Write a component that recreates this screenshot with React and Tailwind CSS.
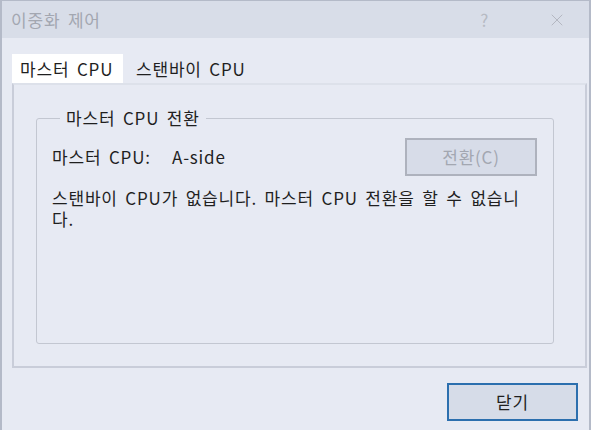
import { X } from "lucide-react";

const font = { fontFamily: '"Noto Sans CJK KR", "Noto Sans", sans-serif' };

export default function App() {
  return (
    <div
      className="w-[591px] h-[430px] bg-[#e7eaf3] border-l-[2px] border-r-[2px] border-t border-[#b4bac8] flex flex-col text-[17px] tracking-[0.8px] [word-spacing:3px] text-[#1f1f1f] overflow-hidden"
      style={font}
    >
      <div className="h-[37px] bg-[#d8dde8] flex items-center pl-[9px] shrink-0">
        <span className="text-[#a3a7b1]">이중화 제어</span>
        <span className="ml-auto mr-[58px] text-[#b6bac3]">?</span>
        <X className="mr-[22px] text-[#b0b4bd]" size={20} strokeWidth={1.1} />
      </div>

      <div className="pl-[10px] pr-[2px] pt-[16px]">
        <div className="flex h-[29px] leading-none">
          <div className="bg-white w-[111px] pl-[8px] flex items-center">마스터 CPU</div>
          <div className="pl-[13px] flex items-center">스탠바이 CPU</div>
        </div>

        <div className="h-[285px] border-2 border-[#c9cdd9] border-t-[#dde1ea] pl-[22px] pr-[32px] pt-[23px]">
          <fieldset className="h-[236px] border border-[#c3c7d1] rounded-[3px] pl-[15px] pr-[15px]">
            <legend className="ml-[8px] px-[6px] leading-[20px]">마스터 CPU 전환</legend>
            <div className="flex items-center mt-[10px]">
              <span className="w-[120px]">마스터 CPU:</span>
              <span>A-side</span>
              <button className="ml-auto mr-[1px] w-[132px] h-[38px] bg-[#d7dce8] border-2 border-[#aeb2bd] text-[#a3a7b1]">
                전환(C)
              </button>
            </div>
            <p className="mt-[11px] leading-[21px] w-[486px] break-all">
              스탠바이 CPU가 없습니다. 마스터 CPU 전환을 할 수 없습니다.
            </p>
          </fieldset>
        </div>

        <div className="flex justify-end pr-[9px] pt-[15px]">
          <button className="w-[131px] h-[38px] bg-[#d6dce8] border-2 border-[#2c6fae]">닫기</button>
        </div>
      </div>
    </div>
  );
}
